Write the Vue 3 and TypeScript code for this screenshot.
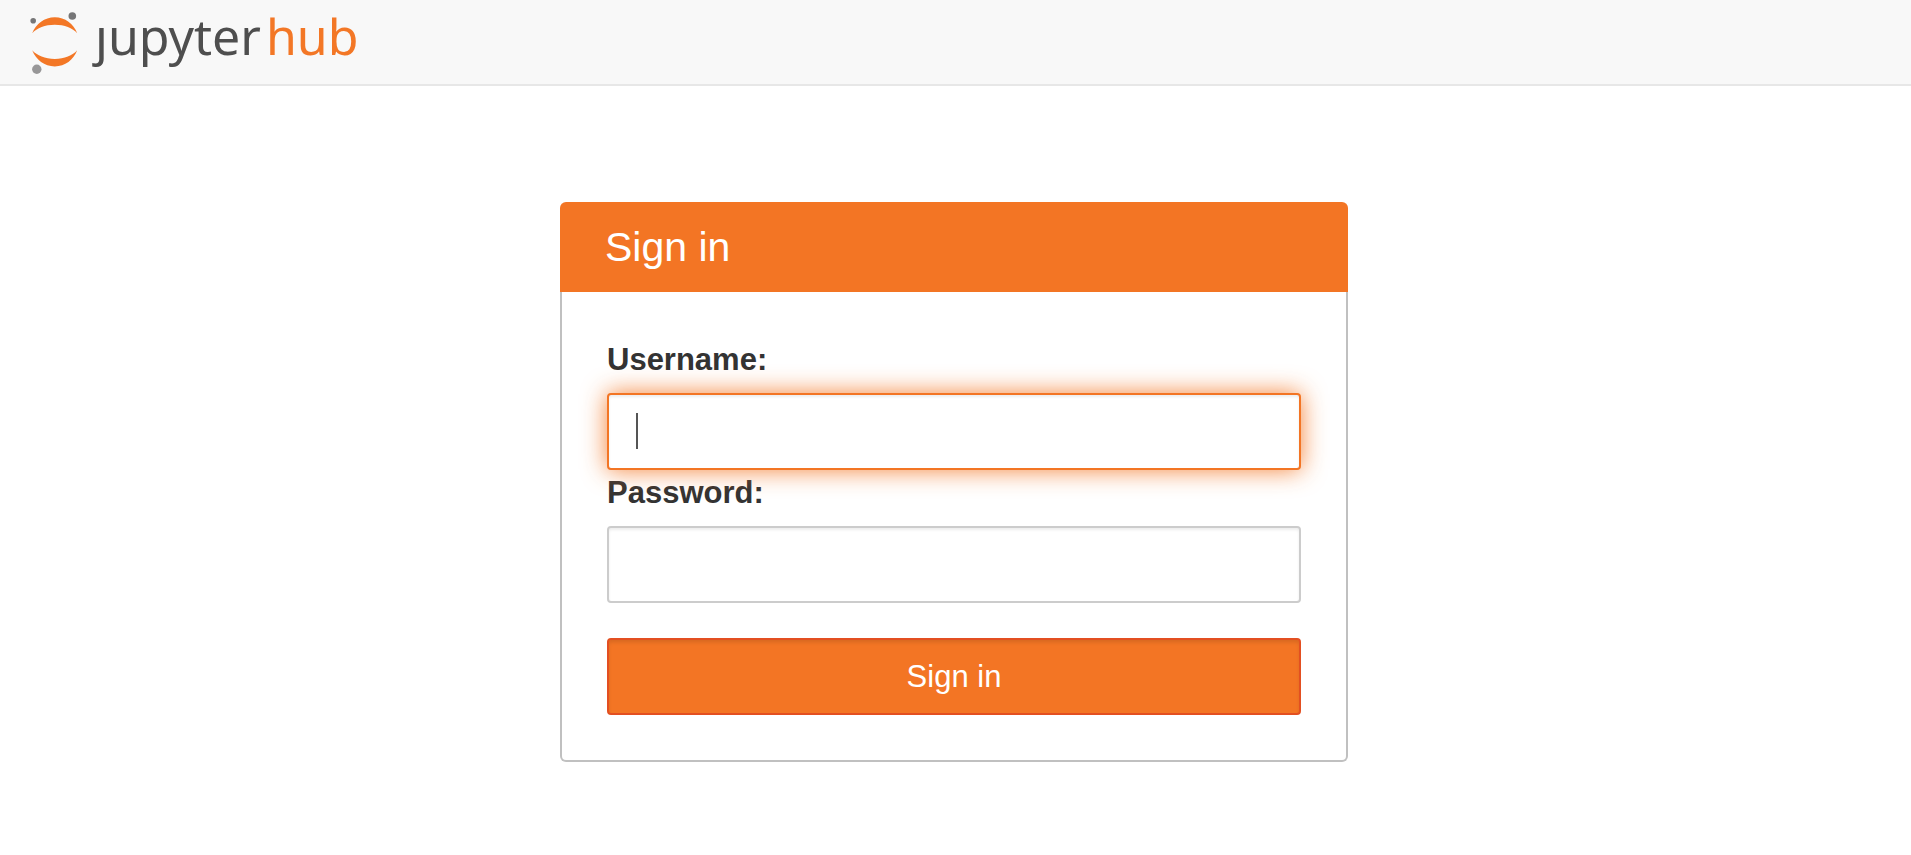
<script setup lang="ts">
import { ref } from 'vue'

const username = ref('')
const password = ref('')
</script>

<template>
  <div class="page">
    <header class="navbar">
      <a class="brand" href="#" aria-label="jupyterhub">
        <svg class="mark" width="52" height="68" viewBox="0 0 52 68" aria-hidden="true">
          <path d="M3.2 25.3C7 15.5 15.5 9.2 25.8 9.2S44.5 15.5 48.2 25.3C43.5 20 35.500 16.800 25.800 16.800S8 20 3.200 25.300Z" fill="#f37726" />
          <path d="M3.200 42.300C7 52 15.500 58.400 25.800 58.400S44.500 52 48.200 42.300C43.500 47.600 35.500 50.900 25.800 50.900S8 47.600 3.200 42.300Z" fill="#f37726" />
          <circle cx="4.2" cy="12.8" r="2.8" fill="#767677" />
          <circle cx="43.3" cy="8" r="3.8" fill="#767677" />
          <circle cx="7.8" cy="61.3" r="4.7" fill="#989798" />
        </svg>
        <span class="wordmark">ȷupyter<span class="hub">hub</span></span>
      </a>
    </header>

    <main class="content">
      <form class="card" @submit.prevent>
        <h1 class="card-title">Sign in</h1>
        <div class="card-body">
          <label for="username">Username:</label>
          <div class="field">
            <input id="username" v-model="username" class="active" type="text" autocomplete="off" />
            <span v-if="!username" class="caret"></span>
          </div>
          <label for="password">Password:</label>
          <div class="field">
            <input id="password" v-model="password" type="password" autocomplete="off" />
          </div>
          <button type="submit">Sign in</button>
        </div>
      </form>
    </main>
  </div>
</template>

<style>
body {
  margin: 0;
  background: #fff;
}
</style>

<style scoped>
.page,
.page * {
  box-sizing: border-box;
}

.page {
  font-family: "Liberation Sans", Arial, sans-serif;
  color: #333;
}

.navbar {
  display: flex;
  height: 86px;
  padding: 8px 29px;
  background: #f8f8f8;
  border-bottom: 2px solid #e7e7e7;
}

.brand {
  display: flex;
  align-items: flex-start;
  gap: 14px;
  text-decoration: none;
}

.mark {
  display: block;
}

.wordmark {
  font-family: "Noto Sans", "Open Sans", sans-serif;
  font-size: 50px;
  line-height: 56px;
  color: #4e4e4e;
}

.hub {
  margin-left: 5px;
  color: #f37726;
}

.content {
  display: flex;
  justify-content: center;
  padding: 116px 3px 40px 0;
}

.card {
  width: 788px;
  max-width: 100%;
}

.card-title {
  margin: 0;
  padding: 0 45px;
  font-size: 41px;
  font-weight: 400;
  line-height: 90px;
  color: #fff;
  background: #f37524;
  border-radius: 6px 6px 0 0;
}

.card-body {
  padding: 45px;
  border: 2px solid #c0c0c0;
  border-top: 0;
  border-radius: 0 0 6px 6px;
}

label {
  display: block;
  margin-bottom: 10px;
  font-size: 31px;
  font-weight: 700;
  line-height: 46px;
}

.field {
  position: relative;
}

input {
  display: block;
  width: 100%;
  height: 77px;
  padding: 0 27px;
  font: inherit;
  font-size: 31px;
  color: #555;
  background: #fff;
  border: 2px solid #ccc;
  border-radius: 4px;
  outline: none;
  box-shadow: inset 0 2px 3px rgba(0, 0, 0, 0.075);
}

input.active {
  border-color: #f37524;
  caret-color: transparent;
  box-shadow: inset 0 2px 3px rgba(0, 0, 0, 0.075), 0 0 24px rgba(243, 117, 36, 0.9);
}

.caret {
  position: absolute;
  top: 20px;
  left: 29px;
  width: 2px;
  height: 36px;
  background: #555;
  pointer-events: none;
}

button {
  display: block;
  width: 100%;
  height: 77px;
  margin-top: 35px;
  padding: 0;
  font: inherit;
  font-size: 31px;
  color: #fff;
  background: #f37524;
  border: 2px solid #e34f21;
  border-radius: 4px;
  box-shadow: inset 0 3px 4px -1px rgba(0, 0, 0, 0.125);
  cursor: pointer;
}
</style>
